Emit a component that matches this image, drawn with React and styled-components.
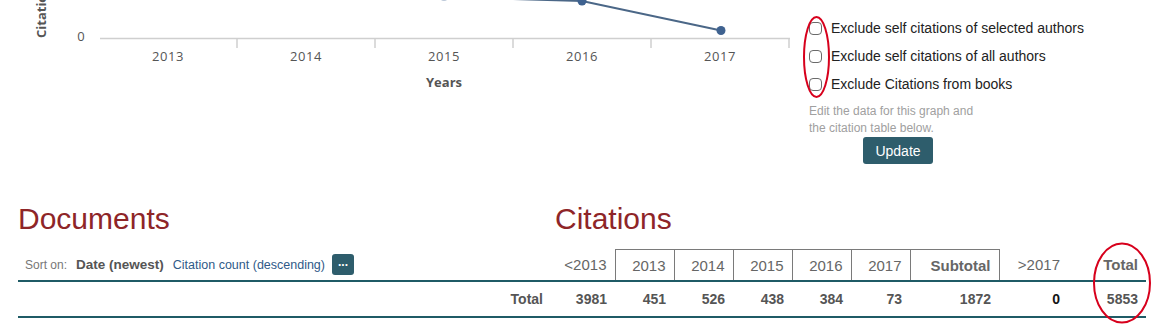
import React from "react";
import styled, { createGlobalStyle } from "styled-components";

const Global = createGlobalStyle`
  html, body { margin: 0; padding: 0; background: #fff; }
  body { font-family: "Liberation Sans", Arial, sans-serif; }
`;

const Page = styled.div`
  position: relative;
  width: 1156px;
  height: 330px;
  overflow: hidden;
`;

const TopRow = styled.div`
  display: flex;
  height: 190px;
`;

const ChartSvg = styled.svg`
  display: block;
  width: 800px;
  height: 100px;
  flex: none;
`;

const Options = styled.div`
  display: flex;
  flex-direction: column;
  padding: 14px 0 0 9px;
`;

const OptionRow = styled.label`
  display: flex;
  align-items: center;
  gap: 9px;
  height: 28px;
  font-size: 14px;
  color: #222;
`;

const Check = styled.input.attrs({ type: "checkbox" })`
  appearance: none;
  margin: 0;
  width: 13px;
  height: 13px;
  border: 1px solid #6a6a6a;
  border-radius: 4px;
  background: #fff;
  box-sizing: border-box;
`;

const Hint = styled.p`
  margin: 5px 0 0;
  font-size: 12px;
  line-height: 17px;
  color: #a0a0a0;
  width: 180px;
`;

const UpdateButton = styled.button`
  margin: 0 0 0 54px;
  width: 70px;
  height: 27px;
  border: none;
  border-radius: 3px;
  background: #2e5d6c;
  color: #fff;
  font-family: "Liberation Sans", Arial, sans-serif;
  font-size: 14px;
  padding: 0;
`;

const Headings = styled.div`
  display: flex;
  padding-left: 18px;
  margin-top: 12px;
`;

const Heading = styled.h2`
  margin: 0;
  font-weight: normal;
  font-size: 30px;
  line-height: 34px;
  color: #8e2528;
  width: ${(p) => p.$w || "auto"};
`;

const Table = styled.table`
  margin: 13px 0 0 18px;
  width: 1128px;
  table-layout: fixed;
  border-collapse: collapse;
`;

const HeadCell = styled.th`
  height: 30px;
  padding: 0 8px 0 0;
  text-align: right;
  vertical-align: middle;
  font-size: 15px;
  font-weight: ${(p) => (p.$bold ? "bold" : "normal")};
  color: #666;
  border-bottom: 2px solid #1f5b66;
  border-top: ${(p) => (p.$boxed ? "1px solid #7a7a7a" : "none")};
  border-left: ${(p) => (p.$boxed ? "1px solid #7a7a7a" : "none")};
  border-right: ${(p) => (p.$boxed ? "1px solid #7a7a7a" : "none")};
`;

const SortCell = styled.th`
  padding: 0 0 0 7px;
  text-align: left;
  vertical-align: middle;
  font-weight: normal;
  border-bottom: 2px solid #1f5b66;
`;

const SortBar = styled.div`
  display: flex;
  align-items: center;
  font-size: 12.5px;
`;

const SortLabel = styled.span`
  color: #777;
  font-size: 12px;
  margin-right: 9px;
`;

const SortActive = styled.span`
  color: #555;
  font-weight: bold;
  font-size: 13.5px;
  margin-right: 9px;
`;

const SortLink = styled.a`
  color: #2f5a88;
  text-decoration: none;
  margin-right: 7px;
`;

const MoreButton = styled.button`
  width: 22px;
  height: 21px;
  padding: 0 0 5px;
  border: none;
  border-radius: 3px;
  background: #2e5d6c;
  color: #fff;
  font-weight: bold;
  font-size: 12px;
  line-height: 16px;
  font-family: "Liberation Sans", Arial, sans-serif;
`;

const BodyCell = styled.td`
  height: 34px;
  padding: 0 ${(p) => p.$pr || "8px"} 0 0;
  text-align: right;
  vertical-align: middle;
  font-size: 14px;
  font-weight: bold;
  color: ${(p) => (p.$dark ? "#151515" : "#555")};
  border-bottom: 2px solid #1f5b66;
`;

const Ring = styled.svg`
  position: absolute;
  overflow: visible;
  pointer-events: none;
`;

const years = ["2013", "2014", "2015", "2016", "2017"];
const cols = [
  { label: "<2013", value: "3981" },
  { label: "2013", value: "451", boxed: true },
  { label: "2014", value: "526", boxed: true },
  { label: "2015", value: "438", boxed: true },
  { label: "2016", value: "384", boxed: true },
  { label: "2017", value: "73", boxed: true },
  { label: "Subtotal", value: "1872", boxed: true, bold: true },
  { label: ">2017", value: "0", dark: true },
  { label: "Total", value: "5853", bold: true },
];
const widths = [537, 60, 59, 59, 59, 59, 59, 89, 69, 78];

function Chart() {
  const chartFont = { fontFamily: "'Open Sans', sans-serif" };
  return (
    <ChartSvg viewBox="0 0 800 100">
      <text
        transform="translate(46 38) rotate(-90)"
        fontSize="13"
        fontWeight="bold"
        fill="#555"
        style={chartFont}
      >
        Citations
      </text>
      <text x="81" y="41" fontSize="13" fill="#555" textAnchor="middle" style={chartFont}>
        0
      </text>
      <line x1="100" y1="38.5" x2="790" y2="38.5" stroke="#cfcfcf" strokeWidth="1.5" />
      {[237, 375, 513, 651, 789].map((x) => (
        <line key={x} x1={x} y1="38" x2={x} y2="48" stroke="#cfcfcf" strokeWidth="1.5" />
      ))}
      {years.map((y, i) => (
        <text
          key={y}
          x={168 + i * 138}
          y="61"
          fontSize="13"
          fill="#555"
          textAnchor="middle"
          letterSpacing="0.6"
          style={chartFont}
        >
          {y}
        </text>
      ))}
      <text x="444" y="87" fontSize="13" fontWeight="bold" fill="#555" textAnchor="middle" style={chartFont}>
        Years
      </text>
      <polyline
        points="444,-3 582,1 721,30.5"
        fill="none"
        stroke="#4b6787"
        strokeWidth="2"
      />
      <circle cx="444" cy="-3" r="4" fill="#3f6290" opacity="0.35" />
      <circle cx="582" cy="1" r="4.5" fill="#3f6290" />
      <circle cx="721" cy="30.5" r="4.5" fill="#3f6290" />
    </ChartSvg>
  );
}

export default function App() {
  return (
    <Page>
      <Global />
      <TopRow>
        <Chart />
        <Options>
          <OptionRow>
            <Check />
            Exclude self citations of selected authors
          </OptionRow>
          <OptionRow>
            <Check />
            Exclude self citations of all authors
          </OptionRow>
          <OptionRow>
            <Check />
            Exclude Citations from books
          </OptionRow>
          <Hint>
            Edit the data for this graph and
            <br />
            the citation table below.
          </Hint>
          <UpdateButton>Update</UpdateButton>
        </Options>
      </TopRow>

      <Headings>
        <Heading $w="537px">Documents</Heading>
        <Heading>Citations</Heading>
      </Headings>

      <Table>
        <colgroup>
          {widths.map((w, i) => (
            <col key={i} style={{ width: w }} />
          ))}
        </colgroup>
        <thead>
          <tr>
            <SortCell>
              <SortBar>
                <SortLabel>Sort on:</SortLabel>
                <SortActive>Date (newest)</SortActive>
                <SortLink href="#">Citation count (descending)</SortLink>
                <MoreButton>...</MoreButton>
              </SortBar>
            </SortCell>
            {cols.map((c) => (
              <HeadCell key={c.label} $boxed={c.boxed} $bold={c.bold}>
                {c.label}
              </HeadCell>
            ))}
          </tr>
        </thead>
        <tbody>
          <tr>
            <BodyCell $pr="12px">Total</BodyCell>
            {cols.map((c) => (
              <BodyCell key={c.label} $dark={c.dark}>
                {c.value}
              </BodyCell>
            ))}
          </tr>
        </tbody>
      </Table>

      <Ring style={{ left: 803, top: 16 }} width="27" height="82">
        <ellipse cx="13.5" cy="41" rx="12.5" ry="40" fill="none" stroke="#d7001c" strokeWidth="2" />
      </Ring>
      <Ring style={{ left: 1093, top: 243 }} width="58" height="81">
        <ellipse cx="29" cy="40" rx="28" ry="39.5" fill="none" stroke="#d7001c" strokeWidth="2" />
      </Ring>
    </Page>
  );
}
